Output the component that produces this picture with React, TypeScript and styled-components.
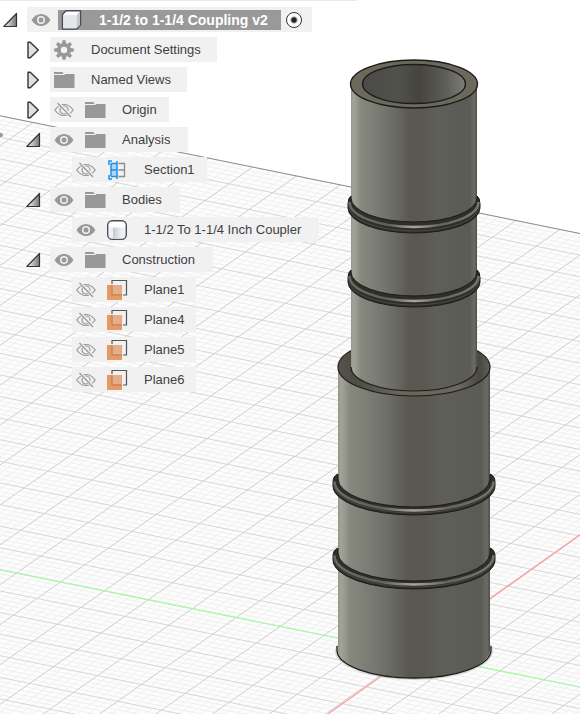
import React from "react";
import styled, { createGlobalStyle } from "styled-components";

const GlobalStyle = createGlobalStyle`
  * { box-sizing: border-box; }
  html, body, #root { height: 100%; }
  body { margin: 0; background: #fff; font-family: "Liberation Sans", Arial, sans-serif; }
`;

const Workspace = styled.main`
  position: relative;
  min-height: 100%;
  overflow: hidden;
`;

const Viewport = styled.svg`
  position: absolute;
  inset: 0;
  width: 100%;
  height: 100%;
`;

const Browser = styled.nav`
  position: relative;
  width: fit-content;
  padding-top: 7px;
`;

const PanelEdge = styled.div`
  position: absolute;
  top: 0;
  left: 0;
  width: 357px;
  height: 1px;
  background: #e9e9e9;
`;

const PanelGrip = styled.div`
  position: absolute;
  top: 133px;
  left: 0;
  width: 3px;
  height: 4px;
  border-radius: 0 2px 2px 0;
  background: #9a9a9a;
`;

const Tree = styled.ul`
  list-style: none;
  margin: 0;
  padding: 0;
  display: flex;
  flex-direction: column;
  gap: 5px;
`;

const Item = styled.li<{ $level: number }>`
  display: flex;
  height: 25px;
  padding-left: ${(p) => [0, 23, 45][p.$level]}px;
`;

const Toggle = styled.button`
  width: 27px;
  height: 25px;
  padding: 0 0 0 3px;
  border: 0;
  background: none;
  display: flex;
  align-items: center;
`;

const ToggleSpace = styled.span`
  width: 27px;
`;

const Row = styled.div<{ $end: number }>`
  display: flex;
  align-items: center;
  height: 25px;
  padding: 0 ${(p) => p.$end}px 0 3px;
  background: #f1f1f1;
`;

const IconButton = styled.button`
  width: 22px;
  height: 22px;
  padding: 0;
  border: 0;
  background: none;
  display: flex;
  align-items: center;
  justify-content: center;
`;

const KindIcon = styled.span<{ $gap: number }>`
  display: flex;
  justify-content: center;
  width: 22px;
  margin-left: ${(p) => p.$gap}px;
`;

const Label = styled.span`
  margin-left: 16px;
  font-size: 13px;
  line-height: 25px;
  color: #3f3f3f;
  white-space: nowrap;
`;

const ActiveTitle = styled.div`
  display: flex;
  align-items: center;
  height: 20px;
  margin-left: 6px;
  padding: 0 13px 0 2px;
  background: #999;
  color: #fff;
  font-size: 14px;
  font-weight: 700;
  gap: 17px;
  white-space: nowrap;
`;

const Radio = styled.input`
  appearance: none;
  width: 16px;
  height: 16px;
  margin: 0 0 0 5px;
  border: 1px solid #333;
  border-radius: 50%;
  background: radial-gradient(circle, #222 0 2px, #fff 4px);
`;

function Arrow({ open }: { open: boolean }) {
  return open ? (
    <svg width="16" height="16" viewBox="0 0 16 16" aria-hidden="true">
      <path d="M13.5 1.5V14.5H.8Z" fill="url(#arrowOpen)" stroke="#333" strokeWidth="1.2" strokeLinejoin="round" />
    </svg>
  ) : (
    <svg width="16" height="18" viewBox="0 0 16 18" aria-hidden="true">
      <path d="M2 1.2H4.2L12.3 9L4.2 16.8H2Z" fill="#e0e0e0" stroke="#333" strokeWidth="1.4" strokeLinejoin="round" />
    </svg>
  );
}

function Eye() {
  return (
    <svg width="20" height="14" viewBox="0 0 20 14" aria-hidden="true">
      <path d="M.5 7C3 3 6.3 1 10 1S17 3 19.5 7C17 11 13.7 13 10 13S3 11 .5 7Z" fill="#989898" />
      <circle cx="10" cy="7" r="4" fill="#f1f1f1" />
      <circle cx="10" cy="7" r="2.5" fill="#989898" />
    </svg>
  );
}

function EyeOff() {
  return (
    <svg width="20" height="16" viewBox="0 0 20 16" fill="none" stroke="#989898" strokeWidth="1.2" aria-hidden="true">
      <path d="M.8 8C3.5 4.3 6.5 2.5 10 2.5S16.5 4.3 19.2 8C16.5 11.7 13.5 13.5 10 13.5S3.5 11.7 .8 8Z" />
      <circle cx="10" cy="8" r="4" />
      <path d="M4 1L17.5 15" stroke="#f1f1f1" strokeWidth="3" />
      <path d="M3.5 1L17 15" />
    </svg>
  );
}

function Folder() {
  return (
    <svg width="22" height="18" viewBox="0 0 22 18" fill="#989898" aria-hidden="true">
      <path d="M1 1H9.5L10.5 3H1Z" />
      <path d="M1 4H11L12.5 3H21.5V17H1Z" />
    </svg>
  );
}

function Gear() {
  return (
    <svg width="20" height="20" viewBox="0 0 20 20" aria-hidden="true">
      <g fill="#989898">
        {[0, 45, 90, 135].map((a) => (
          <path key={a} d="M8.4 .2H11.6L12.2 5V15L11.6 19.8H8.4L7.8 15V5Z" transform={`rotate(${a} 10 10)`} />
        ))}
        <circle cx="10" cy="10" r="7" />
      </g>
      <circle cx="10" cy="10" r="3.2" fill="#f1f1f1" />
    </svg>
  );
}

function Component() {
  return (
    <svg width="22" height="20" viewBox="0 0 22 20" strokeLinejoin="round" aria-hidden="true">
      <path d="M2.5 4.5L6 .8H20.5V15L16.5 19H2.5Z" fill="#fff" stroke="#444b58" strokeWidth="1.4" />
      <path d="M3.2 5H16V18.3H3.2Z" fill="#e4e6ea" />
      <path d="M16.5 5L20 1.5V15L16.5 18.5Z" fill="#c4c7cd" />
    </svg>
  );
}

function Body() {
  return (
    <svg width="22" height="22" viewBox="0 0 22 22" aria-hidden="true">
      <rect x="1.7" y="1.7" width="18.6" height="18.6" rx="4.5" fill="#fff" stroke="#49505c" strokeWidth="1.4" />
      <path d="M3 8Q11 10 19 8V17Q19 19.500 16.500 19.500H5.500Q3 19.500 3 17Z" fill="#eef0f3" />
      <path d="M7 8.500H15V19.500H7Z" fill="url(#bodyShade)" />
    </svg>
  );
}

function Section() {
  return (
    <svg width="20" height="20" viewBox="0 0 20 20" fill="none" aria-hidden="true">
      <path d="M4 3.5H10V16.5H4Z" fill="#a9d8f7" />
      <path d="M5 1H2V5M2 15V19H5M4 3.5V16.5M10 1V19M4 3.5H10M4 10H10M4 16.5H10" stroke="#1e90e6" strokeWidth="1.5" />
      <path d="M11.5 3.5H17.5V16.5H11.5M11.5 10H17.5" stroke="#8b8b8b" strokeWidth="1.3" />
    </svg>
  );
}

function Plane() {
  return (
    <svg width="22" height="22" viewBox="0 0 22 22" aria-hidden="true">
      <path d="M1 6H16V21H1Z" fill="#e59a66" />
      <path d="M6 5V1.5H20.5V16H17" fill="none" stroke="#555" strokeWidth="1.2" />
      <path d="M6.5 6H15.5V15.5H6.5Z" fill="#e3ae89" />
      <path d="M6 6V16H16" fill="none" stroke="#bd7b4f" />
    </svg>
  );
}

type Kind = "gear" | "folder" | "section" | "body" | "plane";
interface Node {
  label: string;
  level: 1 | 2;
  kind: Kind;
  open?: boolean;
  visible?: boolean;
  end: number;
}

const icons: Record<Kind, React.ReactNode> = {
  gear: <Gear />,
  folder: <Folder />,
  section: <Section />,
  body: <Body />,
  plane: <Plane />,
};

const nodes: Node[] = [
  { label: "Document Settings", level: 1, kind: "gear", open: false, end: 16 },
  { label: "Named Views", level: 1, kind: "folder", open: false, end: 16 },
  { label: "Origin", level: 1, kind: "folder", open: false, visible: false, end: 12 },
  { label: "Analysis", level: 1, kind: "folder", open: true, visible: true, end: 18 },
  { label: "Section1", level: 2, kind: "section", visible: false, end: 12 },
  { label: "Bodies", level: 1, kind: "folder", open: true, visible: true, end: 18 },
  { label: "1-1/2 To 1-1/4 Inch Coupler", level: 2, kind: "body", visible: true, end: 18 },
  { label: "Construction", level: 1, kind: "folder", open: true, visible: true, end: 18 },
  { label: "Plane1", level: 2, kind: "plane", visible: false, end: 12 },
  { label: "Plane4", level: 2, kind: "plane", visible: false, end: 12 },
  { label: "Plane5", level: 2, kind: "plane", visible: false, end: 12 },
  { label: "Plane6", level: 2, kind: "plane", visible: false, end: 12 },
];

function TreeItem({ node }: { node: Node }) {
  const hasEye = node.visible !== undefined;
  return (
    <Item $level={node.level}>
      {node.open === undefined ? (
        <ToggleSpace />
      ) : (
        <Toggle aria-label={`Toggle ${node.label}`} aria-expanded={node.open}>
          <Arrow open={node.open} />
        </Toggle>
      )}
      <Row $end={node.end}>
        {hasEye && (
          <IconButton aria-label={`Visibility of ${node.label}`} aria-pressed={node.visible}>
            {node.visible ? <Eye /> : <EyeOff />}
          </IconButton>
        )}
        <KindIcon $gap={hasEye ? 9 : 0}>{icons[node.kind]}</KindIcon>
        <Label>{node.label}</Label>
      </Row>
    </Item>
  );
}

const ORIGIN = { x: 412, y: 653 };
const SLOPE_A = 0.203;
const SLOPE_B = -0.706;
const STEP_A = 21.6;
const STEP_B = 39.9;
const ROWS_BEHIND = 21;

function lines(slope: number, step: number, from: number, to: number, keep: (i: number) => boolean) {
  let d = "";
  for (let i = from; i <= to; i++) {
    if (!keep(i)) continue;
    const y = ORIGIN.y + i * step;
    d += `M-20 ${(y - slope * (ORIGIN.x + 20)).toFixed(1)}L600 ${(y + slope * (600 - ORIGIN.x)).toFixed(1)}`;
  }
  return d;
}

const DIV = 5;
const isMajor = (i: number) => i % DIV === 0;
const isMinor = (i: number) => i % DIV !== 0;
const minorA = lines(SLOPE_A, STEP_A / DIV, -ROWS_BEHIND * DIV, 50, isMinor);
const majorA = lines(SLOPE_A, STEP_A / DIV, -ROWS_BEHIND * DIV, 50, isMajor);
const minorB = lines(SLOPE_B, STEP_B / DIV, -130, 60, isMinor);
const majorB = lines(SLOPE_B, STEP_B / DIV, -130, 60, isMajor);
const edgeY = (x: number) => ORIGIN.y - ROWS_BEHIND * STEP_A + SLOPE_A * (x - ORIGIN.x);
const floor = `M-20 ${edgeY(-20)}L600 ${edgeY(600)}V734H-20Z`;

function Cylinder({ cx, rx, ry, top, bottom }: { cx: number; rx: number; ry: number; top: number; bottom: number }) {
  return (
    <path
      d={`M${cx - rx} ${top}V${bottom}A${rx} ${ry} 0 0 0 ${cx + rx} ${bottom}V${top}Z`}
      fill="url(#metal)"
    />
  );
}

interface RingProps {
  y: number;
  rx: number;
  ry: number;
  inner: number;
  rise: number;
}

function Ring({ y, rx, ry, inner, rise }: RingProps) {
  const l = 414 - rx;
  const r = 414 + rx;
  const il = 414 - inner;
  const ir = 414 + inner;
  const arc = (dy: number, inset: number) =>
    `M${l + inset} ${y + dy}A${rx - inset} ${ry} 0 0 0 ${r - inset} ${y + dy}`;
  return (
    <g fill="none">
      <path
        d={`M${il} ${y - 8}Q${l} ${y - 6} ${l} ${y}V${y + 4}A${rx} ${ry} 0 0 0 ${r} ${y + 4}V${y}Q${r} ${y - 6} ${ir} ${y - 8}V${y - rise}A${inner} ${ry - 1} 0 0 1 ${il} ${y - rise}Z`}
        fill="#2e2e2a"
        stroke="#1b1b19"
      />
      <path d={arc(-rise / 2 + 1, 1.5)} stroke="url(#ringShine)" strokeWidth="2.5" />
      <path d={arc(2, 0.8)} stroke="#504f49" strokeWidth=".8" />
    </g>
  );
}

function Scene() {
  return (
    <Viewport viewBox="0 0 580 714" preserveAspectRatio="xMinYMin slice" role="img" aria-label="Pipe coupling model">
      <defs>
        <linearGradient id="arrowOpen" x1="0" y1="0" x2="1" y2="0">
          <stop offset="0.1" stopColor="#eee" />
          <stop offset="1" stopColor="#777" />
        </linearGradient>
        <linearGradient id="bodyShade">
          <stop offset="0" stopColor="#c3c8d0" />
          <stop offset="1" stopColor="#eef0f3" />
        </linearGradient>
        <linearGradient id="metal">
          <stop offset="0" stopColor="#96978b" />
          <stop offset=".02" stopColor="#a3a499" />
          <stop offset=".08" stopColor="#87887d" />
          <stop offset=".2" stopColor="#7b7c74" />
          <stop offset=".33" stopColor="#6c6d66" />
          <stop offset=".46" stopColor="#5b5851" />
          <stop offset=".56" stopColor="#595750" />
          <stop offset=".68" stopColor="#5e5f58" />
          <stop offset=".94" stopColor="#5b5b55" />
          <stop offset=".98" stopColor="#6b6b64" />
          <stop offset="1" stopColor="#4e4e48" />
        </linearGradient>
        <linearGradient id="bore">
          <stop offset="0" stopColor="#4b4c47" />
          <stop offset=".35" stopColor="#50514b" />
          <stop offset=".55" stopColor="#45433e" />
          <stop offset=".8" stopColor="#5c5d56" />
          <stop offset="1" stopColor="#7d7e76" />
        </linearGradient>
        <linearGradient id="shoulder">
          <stop offset="0" stopColor="#55534c" />
          <stop offset=".12" stopColor="#4f4c45" />
          <stop offset=".4" stopColor="#69655b" />
          <stop offset=".8" stopColor="#6b675d" />
          <stop offset=".93" stopColor="#4a4842" />
          <stop offset="1" stopColor="#625f56" />
        </linearGradient>
        <linearGradient id="ringShine">
          <stop offset="0" stopColor="#6a6a63" />
          <stop offset=".3" stopColor="#625f58" />
          <stop offset=".5" stopColor="#aaa69c" />
          <stop offset=".7" stopColor="#68645c" />
          <stop offset="1" stopColor="#77766e" />
        </linearGradient>
        <clipPath id="floorClip">
          <path d={floor} />
        </clipPath>
      </defs>

      <g clipPath="url(#floorClip)" fill="none">
        <path d={floor} fill="#fdfdfd" />
        <path d={minorA + minorB} stroke="#f0f0f0" />
        <path d={majorA} stroke="#d6d6d6" />
        <path d={majorB} stroke="#cecece" />
      </g>
      <path d={`M0 ${edgeY(0)}L580 ${edgeY(580)}`} stroke="#8d8d8d" />
      <path d="M0 570L580 687" stroke="#a0ff9a" strokeWidth="1.2" />
      <path d="M580 535L328 714" stroke="#ff9c9c" strokeWidth="1.2" />

      <ellipse cx="414" cy="651" rx="79" ry="29" fill="#777" opacity=".25" />
      <Cylinder cx={414} rx={76} ry={28} top={367} bottom={650} />
      <path d="M337 646V650A77 28 0 0 0 491 650V646" fill="none" stroke="#1c1c1a" strokeWidth="1.3" />
      <ellipse cx="414" cy="367" rx="76" ry="29" fill="url(#shoulder)" stroke="#1c1c1a" strokeWidth="1.2" />
      <Cylinder cx={414} rx={63} ry={24} top={85} bottom={367} />
      <path d="M351 367A63 24 0 0 0 477 367" fill="none" stroke="#1c1c1a" strokeWidth="1.2" />
      <ellipse cx="414" cy="84" rx="63.5" ry="24" fill="#6c685c" stroke="#1c1c1a" strokeWidth="1.3" />
      <ellipse cx="414" cy="84" rx="51.5" ry="19.5" fill="url(#bore)" stroke="#1c1c1a" strokeWidth="1.3" />

      <Ring y={204} rx={66} ry={25} inner={63} rise={6} />
      <Ring y={278} rx={66} ry={25} inner={63} rise={6} />
      <Ring y={482} rx={81} ry={29} inner={76} rise={3} />
      <Ring y={556} rx={81} ry={29} inner={76} rise={3} />
    </Viewport>
  );
}

export default function App() {
  return (
    <>
      <GlobalStyle />
      <Workspace>
        <Scene />
        <PanelEdge />
        <PanelGrip />
        <Browser aria-label="Browser">
          <Tree>
            <Item $level={0}>
              <Toggle aria-label="Toggle document" aria-expanded>
                <Arrow open />
              </Toggle>
              <Row $end={10}>
                <IconButton aria-label="Visibility of document" aria-pressed>
                  <Eye />
                </IconButton>
                <ActiveTitle>
                  <Component />
                  <span id="document-title">1-1/2 to 1-1/4 Coupling v2</span>
                </ActiveTitle>
                <Radio type="radio" name="active" defaultChecked aria-labelledby="document-title" />
              </Row>
            </Item>
            {nodes.map((node) => (
              <TreeItem key={node.label} node={node} />
            ))}
          </Tree>
        </Browser>
      </Workspace>
    </>
  );
}
